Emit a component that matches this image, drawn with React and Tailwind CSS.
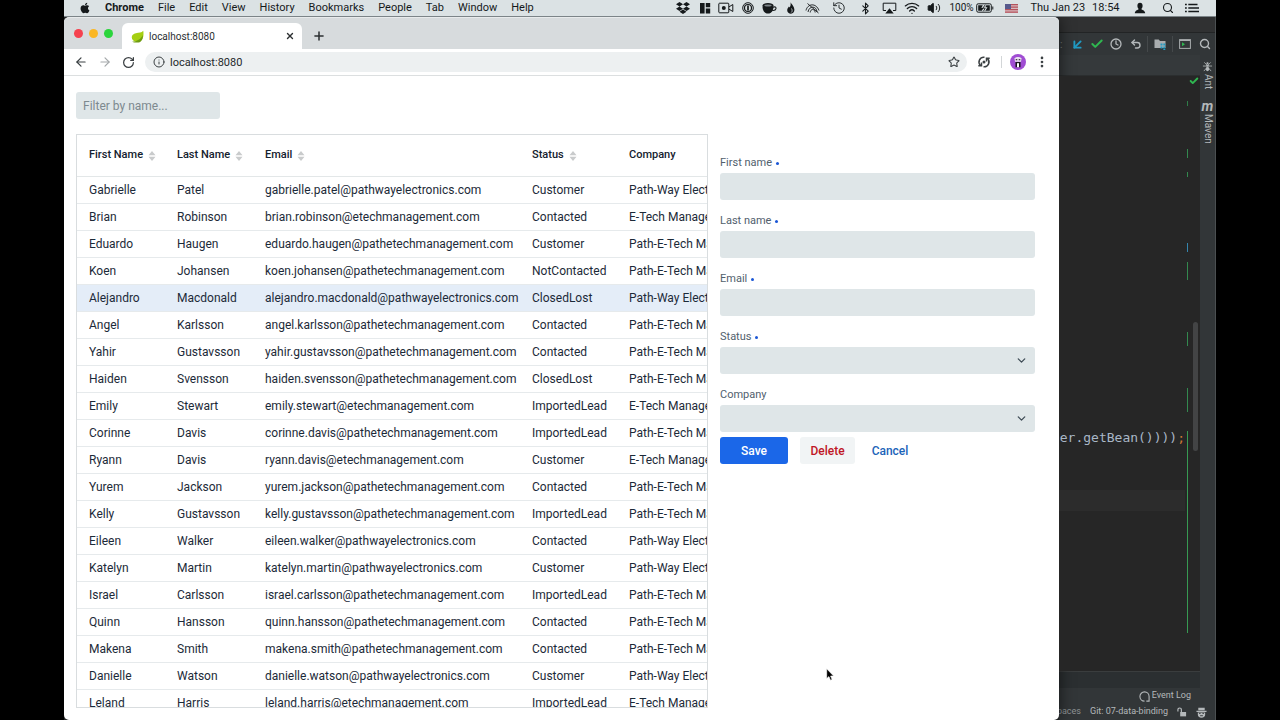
import React, { useState } from 'react';
import {
    ArrowLeft, ArrowRight, RotateCw, Info, Star, X, Plus, EllipsisVertical, ChevronDown,
    Search, Clock, Undo2, Check, ArrowDownLeft, Bluetooth, Wifi, Volume2, History,
} from 'lucide-react';
import { FaApple, FaDropbox } from 'react-icons/fa';

const COMPANIES = {
    pathwayelectronics: 'Path-Way Electronics',
    etechmanagement: 'E-Tech Management',
    pathetechmanagement: 'Path-E-Tech Management',
};

const STATUSES = ['ImportedLead', 'NotContacted', 'Contacted', 'Customer', 'ClosedLost'];

const contacts = [
    ['Gabrielle', 'Patel', 'pathwayelectronics', 'Customer'],
    ['Brian', 'Robinson', 'etechmanagement', 'Contacted'],
    ['Eduardo', 'Haugen', 'pathetechmanagement', 'Customer'],
    ['Koen', 'Johansen', 'pathetechmanagement', 'NotContacted'],
    ['Alejandro', 'Macdonald', 'pathwayelectronics', 'ClosedLost'],
    ['Angel', 'Karlsson', 'pathetechmanagement', 'Contacted'],
    ['Yahir', 'Gustavsson', 'pathetechmanagement', 'Contacted'],
    ['Haiden', 'Svensson', 'pathetechmanagement', 'ClosedLost'],
    ['Emily', 'Stewart', 'etechmanagement', 'ImportedLead'],
    ['Corinne', 'Davis', 'pathetechmanagement', 'ImportedLead'],
    ['Ryann', 'Davis', 'etechmanagement', 'Customer'],
    ['Yurem', 'Jackson', 'pathetechmanagement', 'Contacted'],
    ['Kelly', 'Gustavsson', 'pathetechmanagement', 'ImportedLead'],
    ['Eileen', 'Walker', 'pathwayelectronics', 'Contacted'],
    ['Katelyn', 'Martin', 'pathwayelectronics', 'Customer'],
    ['Israel', 'Carlsson', 'pathetechmanagement', 'ImportedLead'],
    ['Quinn', 'Hansson', 'pathetechmanagement', 'Contacted'],
    ['Makena', 'Smith', 'pathetechmanagement', 'Contacted'],
    ['Danielle', 'Watson', 'pathwayelectronics', 'Customer'],
    ['Leland', 'Harris', 'etechmanagement', 'ImportedLead'],
].map(([first, last, domain, status]) => ({
    first,
    last,
    status,
    email: `${first}.${last}@${domain}.com`.toLowerCase(),
    company: COMPANIES[domain],
}));

const columns = [
    { label: 'First Name', width: 'w-[88px]', sortable: true },
    { label: 'Last Name', width: 'w-[88px]', sortable: true },
    { label: 'Email', width: 'w-[267px]', sortable: true },
    { label: 'Status', width: 'w-[97px]', sortable: true },
    { label: 'Company', width: 'w-[160px]', sortable: false },
];

const MenuBar = () => (
    <header className="flex h-[17px] shrink-0 items-center border-b border-[#7c8488] bg-[#dbe2e4] pl-[15px] pr-[10px] text-[11px] leading-4 text-[#15191b]">
        <FaApple className="mr-[14px] size-[12px]" />
        <nav className="flex gap-[14px]">
            <span className="font-bold">Chrome</span>
            <span>File</span>
            <span>Edit</span>
            <span>View</span>
            <span>History</span>
            <span>Bookmarks</span>
            <span>People</span>
            <span>Tab</span>
            <span>Window</span>
            <span>Help</span>
        </nav>
        <div className="ml-auto flex items-center whitespace-nowrap *:flex *:shrink-0 *:justify-center">
            <span className="w-[22px]"><FaDropbox className="size-[14px]" /></span>
            <span className="w-[21px]">
                <svg viewBox="0 0 12 12" className="size-[12px]" fill="currentColor">
                    <path d="M1 1h4.6v10.500H1zM6.800 1h4.400v4.200H6.800zM6.800 6.600h4.400v4.900H6.800z" />
                </svg>
            </span>
            <span className="w-[22px]">
                <svg viewBox="0 0 16 12" className="h-[12px] w-[16px]" fill="none" stroke="currentColor">
                    <rect x=".8" y="1.200" width="10" height="9.600" rx=".8" />
                    <path d="M10.800 5l4-2.500v7l-4-2.500" />
                    <circle cx="5.800" cy="6" r="2" fill="currentColor" stroke="none" />
                </svg>
            </span>
            <span className="w-[22px]">
                <svg viewBox="0 0 12 12" className="size-[12px]" fill="none" stroke="currentColor">
                    <circle cx="6" cy="6" r="5.300" />
                    <circle cx="6" cy="6" r="3.500" strokeWidth="1.200" />
                    <path d="M6 3.600v4.800" strokeWidth="1.700" />
                </svg>
            </span>
            <span className="w-[21px]">
                <svg viewBox="0 0 15 12" className="h-[12px] w-[15px]" fill="currentColor">
                    <path d="M.5 4.200c0 4 1.800 7.300 5.500 7.300s5.500-3.300 5.500-7.300z" />
                    <ellipse cx="6" cy="3.600" rx="5.500" ry="2.500" />
                    <ellipse cx="6" cy="3.500" rx="3.600" ry="1.100" fill="#7c8488" />
                    <path d="M11 5.200c2-.8 3.300 0 3 1.500-.3 1.400-2 2-3.800 1.800" fill="none" stroke="currentColor" strokeWidth="1.100" />
                </svg>
            </span>
            <span className="w-[22px]">
                <svg viewBox="0 0 10 12" className="h-[12px] w-[10px]" fill="currentColor">
                    <path d="M4.500.3c1 1.500 3.900 4.600 3.900 7.500C8.400 10 7 11.700 5 11.700S1.200 10.200 1.200 8.200c0-1.400.8-2.500 1.700-3.800l.8 1.200C4.600 4 4.900 2.500 4.500.3z" />
                    <path d="M5.500 6.500c.8 1.500 1 3-.3 4" fill="none" stroke="#dbe2e4" strokeWidth=".8" />
                </svg>
            </span>
            <span className="w-[21px]">
                <svg viewBox="0 0 15 12" className="h-[12px] w-[15px]" fill="none" stroke="currentColor" strokeWidth=".9">
                    <path d="M1 8.500C2.500 1.500 11 .5 14 8.500M3 10c1-6.500 8.500-6.500 9 0M5.200 10.500c.3-4 4.500-4 5 0M2.500 1.500l11 9.500" />
                </svg>
            </span>
            <span className="w-[32px]"><History className="size-[14px]" strokeWidth={1.5} /></span>
            <span className="w-[20px]"><Bluetooth className="size-[13px]" strokeWidth={2} /></span>
            <span className="w-[28px]">
                <svg viewBox="0 0 15 12" className="h-[12px] w-[15px]" fill="none" stroke="currentColor">
                    <path d="M4 8.500H1.200V1.200h12.600v7.300H11" />
                    <path d="M7.500 6.200l4.200 5.300H3.300z" fill="currentColor" stroke="none" />
                </svg>
            </span>
            <span className="w-[18px]"><Wifi className="size-[16px]" strokeWidth={2} /></span>
            <span className="w-[26px]"><Volume2 className="size-[14px] [&>path:first-child]:fill-current" strokeWidth={1.6} /></span>
            <span className="w-[29px] text-[10px]">100%</span>
            <span className="w-[18px]">
                <svg viewBox="0 0 18 10" className="h-[10px] w-[18px]" fill="none" stroke="currentColor">
                    <rect x=".7" y=".8" width="14.600" height="8.400" rx="1.500" />
                    <path d="M2.200 2.200h4.600L5.400 5h2L6 7.800H2.200zM10.300 2.200h3.500v5.600H9.300l2.200-3.500H9.300zM16.300 3.500h1v3h-1z" fill="currentColor" stroke="none" />
                    <path d="M9.300 1.800L6.800 5.200h2.400L7.500 8.200" strokeWidth=".9" />
                </svg>
            </span>
            <span className="w-[34px]">
                <svg viewBox="0 0 13 9" className="h-[9px] w-[13px]">
                    <rect width="13" height="9" fill="#d9b9bd" />
                    <path d="M0 .7h13M0 3.200h13M0 5.700h13M0 8.200h13" stroke="#b4525c" strokeWidth="1.200" />
                    <rect width="6" height="5" fill="#56598c" />
                </svg>
            </span>
            <span className="w-[94px] gap-[7px]"><span>Thu Jan 23</span><span>18:54</span></span>
            <span className="w-[36px]">
                <svg viewBox="0 0 12 12" className="size-[12px]" fill="currentColor">
                    <path d="M6 .8c1.700 0 2.600 1.200 2.600 2.900C8.600 5.200 8 6.500 7.200 7c.3.900 3.900 1.200 4 4.200H.8C.9 8.200 4.500 7.900 4.800 7 4 6.500 3.400 5.200 3.400 3.700 3.400 2 4.300.8 6 .8z" />
                </svg>
            </span>
            <span className="w-[20px]"><Search className="size-[12px]" strokeWidth={2.2} /></span>
            <span className="w-[28px]">
                <svg viewBox="0 0 14 10" className="h-[10px] w-[14px]" stroke="currentColor" strokeWidth="1.500">
                    <path d="M0 1.500h1.800M3.300 1.500H12.500M0 5h1.800M3.300 5H14M0 8.500h1.800M3.300 8.500H14" />
                </svg>
            </span>
        </div>
    </header>
);

const TabStrip = () => (
    <div className="flex h-[31px] items-end bg-[#d7dbdd] pl-[10px]">
        <div className="flex h-full items-center gap-[6px] pr-[9px]">
            <span className="size-[9px] rounded-full bg-[#f5424f]" />
            <span className="size-[9px] rounded-full bg-[#fbb724]" />
            <span className="size-[9px] rounded-full bg-[#2bd53c]" />
        </div>
        <div className="flex h-[26px] w-[180px] items-center rounded-t-[6px] bg-white pl-[9px] pr-[7px] text-[#2c3032]">
            <svg viewBox="0 0 12 12" className="mr-[5px] size-[13px]">
                <path d="M11.300.8c.8 5-.3 9.700-5.500 9.900-1.600.1-3-.4-4-1.300C-.6 6.500 1.200 3.600 4.500 3c2.800-.5 5.400-.3 6.800-2.200z" fill="#a5cf12" />
                <path d="M1 10.800c4.500-.4 8.200-2.300 9.800-6.300.6 4.300-1.700 7.200-5.200 7.100-1.700 0-3-.1-4.600-.8z" fill="#6f9c10" />
            </svg>
            <span className="text-[10px]">localhost:8080</span>
            <button aria-label="Close tab" className="ml-auto"><X className="size-[10px]" strokeWidth={3.2} /></button>
        </div>
        <button aria-label="New tab" className="mb-[6px] ml-[10px] text-[#2c3032]">
            <Plus className="size-[14px]" strokeWidth={2.6} />
        </button>
    </div>
);

const Toolbar = () => (
    <div className="flex h-[27px] items-center border-b border-[#dcdfe0] bg-white px-[10px] text-[#3b4043]">
        <button aria-label="Back"><ArrowLeft className="size-[14px]" strokeWidth={2.1} /></button>
        <button aria-label="Forward" className="ml-[10px] text-[#a4a8aa]"><ArrowRight className="size-[14px]" strokeWidth={2} /></button>
        <button aria-label="Reload" className="ml-[10px]"><RotateCw className="size-[13px]" strokeWidth={2.3} /></button>
        <div className="ml-[10px] flex h-5 flex-1 items-center rounded-full bg-[#edf0f1] pl-[8px] pr-[7px]">
            <Info className="size-[12px]" strokeWidth={2} />
            <input
                aria-label="Address"
                defaultValue="localhost:8080"
                className="ml-[5px] h-5 min-w-0 flex-1 bg-transparent text-[11px] text-[#24292b] outline-none"
            />
            <Star className="size-[12px]" strokeWidth={2.2} />
        </div>
        <svg viewBox="0 0 14 14" className="ml-[10px] size-[14px]" fill="none" stroke="currentColor" strokeWidth="1.500">
            <path d="M7.500 2.200A4.800 4.800 0 0 0 3.500 10.400M6.500 11.800A4.800 4.800 0 0 0 10.500 3.600" />
            <path d="M1.300 10.800h3.200V7.600M12.700 3.200H9.500v3.200" />
            <circle cx="7" cy="7" r="1.500" fill="currentColor" stroke="none" />
        </svg>
        <span className="ml-[10px] h-3 w-px bg-[#d3d6d8]" />
        <svg viewBox="0 0 16 16" className="ml-[8px] size-[16px]">
            <circle cx="8" cy="8" r="8" fill="#a04dd3" />
            <path d="M4.500 4.500c1-2 6-2 7 0l-.5 3.300H5z" fill="#e9dff0" />
            <path d="M5.500 8h5v5.300h-5z" fill="#17121a" />
            <path d="M7 9.500l1-.8 1 .8v3.800H7z" fill="#fff" />
            <path d="M5.700 5.700h1.600M8.700 5.700h1.600" stroke="#17121a" strokeWidth="1.100" />
        </svg>
        <button aria-label="Menu" className="ml-[9px]"><EllipsisVertical className="size-[14px]" strokeWidth={2.6} /></button>
    </div>
);

const SortIcon = () => (
    <svg viewBox="0 0 8 10" className="h-[10px] w-[8px]" fill="#c9cbcc">
        <path d="M4 0l3.500 4.200H.5zM4 10L.5 5.800h7z" />
    </svg>
);

const ContactGrid = () => {
    const [selected] = useState('Alejandro');

    return (
        <div className="min-w-0 flex-1 overflow-hidden border border-[#d9dddf]">
            <table className="w-full table-fixed border-separate border-spacing-0 text-left text-[12px] text-[#1c2a38]">
                <thead>
                    <tr className="h-[42px]">
                        {columns.map((col) => (
                            <th key={col.label} className={`${col.width} border-b border-[#e3e7e8] pl-3 text-[11px] font-medium text-[#14212e]`}>
                                <span className="flex items-center gap-[5px]">
                                    {col.label}
                                    {col.sortable && <SortIcon />}
                                </span>
                            </th>
                        ))}
                    </tr>
                </thead>
                <tbody className="[&_td]:border-b [&_td]:border-[#e6eaec] [&_td]:pl-3">
                    {contacts.map((c) => (
                        <tr key={c.email} className={`h-[27px] whitespace-nowrap ${c.first === selected ? 'bg-[#e4edf8]' : ''}`}>
                            <td>{c.first}</td>
                            <td>{c.last}</td>
                            <td>{c.email}</td>
                            <td>{c.status}</td>
                            <td>{c.company}</td>
                        </tr>
                    ))}
                </tbody>
            </table>
        </div>
    );
};

const Field = ({ id, label, required, options }) => (
    <div className="mb-[13px]">
        <label htmlFor={id} className="mb-[2px] flex items-center gap-[4px] text-[11px] leading-4 text-[#51606d]">
            {label}
            {required && <span className="size-[3px] rounded-full bg-[#1a56d6]" />}
        </label>
        {options ? (
            <div className="relative">
                <select id={id} defaultValue="" className="block h-[27px] w-full appearance-none rounded-[3px] bg-[#dfe6e8] px-2 text-[12px] outline-none">
                    <option value="" />
                    {options.map((o) => <option key={o}>{o}</option>)}
                </select>
                <ChevronDown className="pointer-events-none absolute right-[7px] top-[7px] size-[13px] text-[#3e4b55]" strokeWidth={2.4} />
            </div>
        ) : (
            <input id={id} type="text" className="block h-[27px] w-full rounded-[3px] bg-[#dfe6e8] px-2 text-[12px] outline-none" />
        )}
    </div>
);

const ContactForm = () => (
    <form className="w-[339px] shrink-0 px-3 pt-[21px]" onSubmit={(e) => e.preventDefault()}>
        <Field id="firstName" label="First name" required />
        <Field id="lastName" label="Last name" required />
        <Field id="email" label="Email" required />
        <Field id="status" label="Status" required options={STATUSES} />
        <Field id="company" label="Company" options={Object.values(COMPANIES)} />
        <div className="-mt-[8px] flex text-[12px] font-medium">
            <button type="submit" className="h-[27px] w-[68px] rounded-[3px] bg-[#1b67e8] text-white">Save</button>
            <button type="button" className="ml-3 h-[27px] w-[55px] rounded-[3px] bg-[#f1f4f5] text-[#bf1626]">Delete</button>
            <button type="button" className="ml-2 h-[27px] w-[54px] text-[#1c64b9]">Cancel</button>
        </div>
    </form>
);

const Browser = () => (
    <main className="relative flex min-w-0 flex-1 flex-col overflow-hidden rounded-[5px] border-t border-[#e8ebec] bg-white shadow-[0_0_16px_rgba(0,0,0,0.6)]">
        <TabStrip />
        <Toolbar />
        <div className="flex min-h-0 flex-1 flex-col px-3 pb-3 pt-[16px]">
            <input
                type="text"
                aria-label="Filter by name"
                placeholder="Filter by name..."
                className="h-[27px] w-36 shrink-0 rounded-[3px] bg-[#dfe6e8] px-[7px] text-[12px] outline-none placeholder:text-[#7d898f]"
            />
            <div className="mt-[15px] flex min-h-0 flex-1">
                <ContactGrid />
                <ContactForm />
            </div>
        </div>
        {/* mouse pointer */}
        <svg viewBox="0 0 9 13" className="absolute left-[762px] top-[650px] h-[13px] w-[9px]">
            <path d="M.7.800v9.800l2.200-2 1.600 3.600 1.600-.7L4.600 8h3z" fill="#000" stroke="#fff" strokeWidth=".6" />
        </svg>
    </main>
);

// changed lines shown in the editor's right gutter
const changeMarks = [
    'mt-[25px] h-[5px] bg-[#2f7d49]',
    'mt-[43px] h-[9px] bg-[#33894f]',
    'mt-[14px] h-[5px] bg-[#33894f]',
    'mt-[66px] h-[9px] bg-[#3585ad]',
    'mt-[10px] h-[18px] bg-[#33894f]',
    'mt-[52px] h-[14px] bg-[#33894f]',
    'mt-[42px] h-[24px] bg-[#33894f]',
    'mt-[19px] h-[202px] bg-[#379a52]',
];

const Ide = () => (
    <aside className="flex w-[157px] shrink-0 flex-col overflow-hidden border-r border-[#4b4f51] bg-[#323638] text-[#b4b8ba]">
        <div className="h-4 shrink-0 border-b border-[#222425] bg-[#303132]" />
        <div className="flex h-[22px] shrink-0 items-center justify-end pr-[4px]">
            <span className="mr-auto pl-[1px] text-[10px] text-[#7c8082]">:</span>
            <ArrowDownLeft className="size-[15px] text-[#209bc4]" strokeWidth={3} />
            <Check className="ml-[5px] size-[14px] text-[#2fb750]" strokeWidth={3.4} />
            <Clock className="ml-[6px] size-[12px]" strokeWidth={2.6} />
            <Undo2 className="ml-[8px] size-[12px]" strokeWidth={2.8} />
            <span className="ml-[5px] h-4 w-px bg-[#45494b]" />
            <svg viewBox="0 0 13 12" className="ml-[6px] h-[12px] w-[13px]">
                <path d="M.5 1.500h4.200L6 3h5.500v7H.5z" fill="#a9adaf" />
                <path d="M6.500 5.500h2v2h-2zM9.300 5.500h2v2h-2zM6.500 8.400h2v2h-2zM9.300 8.400h2v2h-2zM9.300 11h2v1h-2z" fill="#209bc4" />
            </svg>
            <span className="ml-[5px] h-4 w-px bg-[#45494b]" />
            <svg viewBox="0 0 12 10" className="ml-[6px] h-[10px] w-[12px]" fill="none">
                <rect x=".6" y=".6" width="10.800" height="8.800" stroke="#a9adaf" />
                <path d="M1 1.500h10" stroke="#a9adaf" />
                <path d="M3 3.300l3 2-3 2z" fill="#2fb750" />
            </svg>
            <Search className="ml-[8px] size-[12px]" strokeWidth={2.8} />
        </div>
        <div className="flex min-h-0 flex-1">
            <div className="flex min-w-0 flex-1 flex-col">
                <div className="h-[21px] shrink-0 border-b border-[#2b2e2f] bg-[#35393b]" />
                <div className="relative flex min-h-0 flex-1 bg-[#262626]">
                    <div className="flex min-w-0 flex-1 flex-col pt-[352px]">
                        <pre className="flex h-5 justify-end overflow-hidden text-[13px] leading-5 text-[#a9b7c6]">
                            <code className="font-['DejaVu_Sans_Mono',monospace]">er.getBean())))<span className="text-[#cc7832]">;</span></code>
                        </pre>
                        <div className="mt-[42px] h-[21px] bg-[#2c2c2c]" />
                    </div>
                    <div className="ml-[2px] w-px">
                        {changeMarks.map((mark) => <div key={mark} className={mark} />)}
                    </div>
                    <div className="ml-[5px] mr-[2px] w-[5px] pt-[246px]">
                        <div className="h-[129px] rounded-full bg-[#434445]" />
                    </div>
                    {/* inspection status, floats over the gutter */}
                    <Check className="absolute right-[1px] top-0 size-[10px] text-[#2fb750]" strokeWidth={4.5} />
                </div>
                <div className="h-[17px] shrink-0 border-t border-[#3a3d3e] bg-[#2b2f31]" />
            </div>
            <div className="flex w-[15px] shrink-0 flex-col items-center pt-[6px] text-[10px] leading-4">
                <svg viewBox="0 0 12 12" className="size-[11px] shrink-0" fill="currentColor" stroke="currentColor">
                    <circle cx="6" cy="2.500" r="1.200" stroke="none" />
                    <ellipse cx="6" cy="5.200" rx="1.500" ry="1.200" stroke="none" />
                    <ellipse cx="6" cy="8.800" rx="1.900" ry="2.300" stroke="none" />
                    <path d="M2.500 1.500L6 5l3.500-3.500M1 5.500h10M2 11l4-4.500L10 11" fill="none" strokeWidth=".9" />
                </svg>
                <span className="mt-[2px] [writing-mode:vertical-rl]">Ant</span>
                <span className="mt-[9px] text-[14px] font-bold italic leading-4">m</span>
                <span className="[writing-mode:vertical-rl]">Maven</span>
            </div>
        </div>
        <div className="flex h-4 shrink-0 items-center justify-end gap-[2px] pr-[24px] text-[9px]">
            <svg viewBox="0 0 12 12" className="size-[11px]" fill="none" stroke="currentColor" strokeWidth="1.200">
                <path d="M6 1a5 5 0 1 0 0 10M6 1a5 5 0 0 1 5 5v5H8" />
            </svg>
            <span>Event Log</span>
        </div>
        <div className="flex h-4 shrink-0 items-center whitespace-nowrap pr-[8px] text-[9px]">
            <div className="flex w-[22px] justify-end overflow-hidden text-[#8f9496]"><span>paces</span></div>
            <span className="ml-[9px]">Git: 07-data-binding</span>
            <svg viewBox="0 0 11 11" className="ml-auto size-[10px]" fill="none" stroke="#b4b8ba" strokeWidth="1.300">
                <path d="M1 5V3a1.900 1.900 0 0 1 3.800 0v3" />
                <path d="M3.500 5.500H10v4.800H3.500z" fill="#b4b8ba" stroke="none" />
            </svg>
            <svg viewBox="0 0 12 12" className="ml-[9px] size-[11px]" fill="#b4b8ba">
                <path d="M2.500.8h7v2.700h-7zM.5 4h11v1.500H.5zM2 6h8v2.500c0 1.800-1.500 3.200-4 3.200S2 10.300 2 8.500z" />
                <path d="M3.300 7h1.700M7 7h1.700M4.500 9.500h3" stroke="#323638" />
            </svg>
        </div>
    </aside>
);

const App = () => {
    return (
        <div className="flex h-screen flex-col overflow-hidden bg-black px-16 font-[Roboto,'Liberation_Sans',sans-serif]">
            <MenuBar />
            <div className="flex min-h-0 flex-1 overflow-hidden bg-[#2a2c2d]">
                <Browser />
                <Ide />
            </div>
        </div>
    );
};

export default App;
